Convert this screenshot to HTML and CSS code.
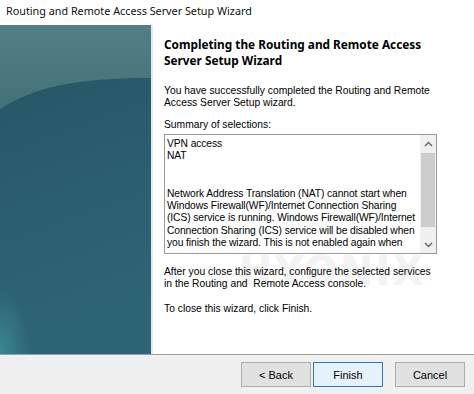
FILE: index.html
```html
<!DOCTYPE html>
<html lang="en">
<head>
    <meta charset="UTF-8">
    <title>Routing and Remote Access Server Setup Wizard</title>
    <link rel="stylesheet" href="styles.css">
</head>
<body>
<div class="window">
    <div class="titlebar">Routing and Remote Access Server Setup Wizard</div>

    <div class="main">
        <!-- wizard banner on the left -->
        <div class="side">
            <svg class="side-art" viewBox="0 0 151 329" preserveAspectRatio="none">
                <defs>
                    <linearGradient id="topfade" x1="0" y1="0" x2="0" y2="1">
                        <stop offset="0" stop-color="#527f85"/>
                        <stop offset="0.3" stop-color="#426f77"/>
                        <stop offset="1" stop-color="#3a6a74"/>
                    </linearGradient>
                    <linearGradient id="lowfade" x1="0" y1="0" x2="0.2" y2="1">
                        <stop offset="0" stop-color="#275765"/>
                        <stop offset="0.5" stop-color="#2b5e70"/>
                        <stop offset="1" stop-color="#2e6576"/>
                    </linearGradient>
                    <radialGradient id="glow" cx="0" cy="1" r="0.2">
                        <stop offset="0" stop-color="#3f8f98" stop-opacity="0.8"/>
                        <stop offset="1" stop-color="#3f8f98" stop-opacity="0"/>
                    </radialGradient>
                </defs>
                <rect width="151" height="329" fill="url(#topfade)"/>
                <path d="M0 84 C35 62 75 53 151 53 L151 329 L0 329 Z" fill="url(#lowfade)"/>
                <rect width="151" height="329" fill="url(#glow)"/>
            </svg>
        </div>

        <div class="content">
            <div class="watermark">HYONIX</div>
            <h1 class="heading">Completing the Routing and Remote Access<br>Server Setup Wizard</h1>
            <p class="intro">You have successfully completed the Routing and Remote<br>Access Server Setup wizard.</p>
            <p class="label">Summary of selections:</p>

            <div class="summary">
                <div class="summary-text">
                    VPN access<br>
                    NAT<br>
                    <br>
                    <br>
                    Network Address Translation (NAT) cannot start when<br>
                    Windows Firewall(WF)/Internet Connection Sharing<br>
                    (ICS) service is running. Windows Firewall(WF)/Internet<br>
                    Connection Sharing (ICS) service will be disabled when<br>
                    you finish the wizard. This is not enabled again when
                </div>
                <div class="scrollbar">
                    <div class="arrow">
                        <svg width="9" height="6" viewBox="0 0 9 6"><path d="M1 5 L4.5 1.5 L8 5" fill="none" stroke="#606060" stroke-width="1.3"/></svg>
                    </div>
                    <div class="track"><div class="thumb"></div></div>
                    <div class="arrow">
                        <svg width="9" height="6" viewBox="0 0 9 6"><path d="M1 1 L4.5 4.5 L8 1" fill="none" stroke="#606060" stroke-width="1.3"/></svg>
                    </div>
                </div>
            </div>

            <p class="after">After you close this wizard, configure the selected services<br>in the Routing and &nbsp;Remote Access console.</p>
            <p class="finish-note">To close this wizard, click Finish.</p>
        </div>
    </div>

    <div class="footer">
        <button class="btn">&lt; Back</button>
        <button class="btn btn-default">Finish</button>
        <button class="btn btn-cancel">Cancel</button>
    </div>
</div>
</body>
</html>
```

FILE: styles.css
```css
*{
   margin:0;
   padding:0;
   box-sizing:border-box;
}
body{
   background:#ffffff;
   font-family:"Liberation Sans", Arial, sans-serif;
   font-size:10.3px;
   color:#000;
}
.window{
   width:474px;
   height:394px;
   display:flex;
   flex-direction:column;
   overflow:hidden;
}
.titlebar{
   height:25px;
   padding:3px 0 0 6px;
   font-family:"Noto Sans", "Open Sans", sans-serif;
   font-size:10.8px;
   color:#111;
}
.main{
   display:flex;
   height:329px;
}
.side{
   width:153px;
   border-right:2px solid #e8e8e8;
   flex-shrink:0;
}
.side-art{
   display:block;
   width:151px;
   height:329px;
}
.content{
   position:relative;
   flex:1;
   padding:11px 0 0 11px;
}
.watermark{
   position:absolute;
   left:86px;
   top:223px;
   font-family:"DejaVu Sans", sans-serif;
   font-weight:bold;
   font-size:40px;
   letter-spacing:2px;
   color:#f3f3f3;
}
.heading{
   position:relative;
   font-family:"Noto Sans", "Open Sans", sans-serif;
   font-size:11.8px;
   font-weight:bold;
   line-height:16px;
   white-space:nowrap;
}
.intro,
.label,
.after,
.finish-note{
   position:relative;
   line-height:12px;
   white-space:nowrap;
}
.intro{
   margin-top:17px;
}
.label{
   margin-top:10px;
}
.summary{
   position:relative;
   display:flex;
   width:273px;
   height:120px;
   margin-top:3px;
   border:1px solid #9a9a9a;
   background:#fff;
}
.summary-text{
   flex:1;
   padding:3px 0 0 2px;
   line-height:12.4px;
   letter-spacing:-0.1px;
   white-space:nowrap;
   overflow:hidden;
}
.scrollbar{
   width:16px;
   display:flex;
   flex-direction:column;
   background:#f0f0f0;
}
.arrow{
   height:17px;
   display:flex;
   align-items:center;
   justify-content:center;
}
.track{
   flex:1;
   padding:1px 0 0 0;
}
.thumb{
   height:74px;
   margin:0 1px;
   background:#cdcdcd;
}
.after{
   margin-top:12px;
}
.finish-note{
   margin-top:13px;
}
.footer{
   flex:1;
   display:flex;
   justify-content:flex-end;
   align-items:flex-start;
   padding:7px 9px 0 0;
   border-top:1px solid #a0a0a0;
   background:#f0f0f0;
}
.btn{
   width:70px;
   height:25px;
   font-family:"Liberation Sans", Arial, sans-serif;
   font-size:11px;
   color:#000;
   background:#e1e1e1;
   border:1px solid #adadad;
}
.btn-default{
   margin-left:2px;
   background:#e5f1fb;
   border:1px solid #2c78c8;
}
.btn-cancel{
   margin-left:12px;
}
```
